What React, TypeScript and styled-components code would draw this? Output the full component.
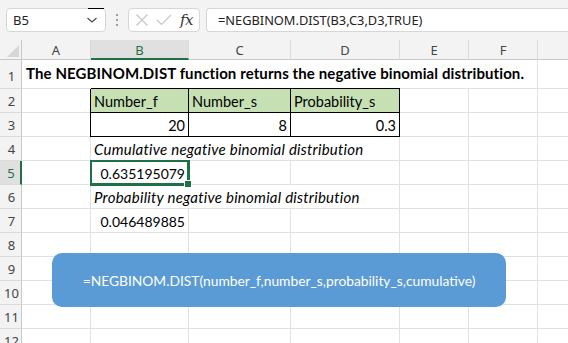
import { FC } from 'react'
import styled, { createGlobalStyle, css } from 'styled-components'

const GlobalStyle = createGlobalStyle`
  html, body {
    margin: 0;
    padding: 0;
    background: #ffffff;
    overflow: hidden;
  }
`

const UI_FONT = `"Noto Sans", "Open Sans", sans-serif`
const CELL_FONT = `Lato, "Liberation Sans", sans-serif`
const GREEN = '#1e7145'
const GRID = '#e1e1e1'

const columns = ['A', 'B', 'C', 'D', 'E', 'F', '']
const colWidths = [69, 98, 102, 109, 69, 69, 60]

const FormulaToolbar = () => {
  return (
    <TopBar>
      <NameBox>
        <span>B5</span>
        <TopMark />
        <svg width="12" height="8" viewBox="0 0 12 8">
          <path d="M1.5 2 L6 6 L10.5 2" fill="none" stroke="#444" strokeWidth="1.1" />
        </svg>
      </NameBox>
      <Dots>
        <svg width="4" height="14" viewBox="0 0 4 14">
          <circle cx="2" cy="2" r="1.1" fill="#8a8a8a" />
          <circle cx="2" cy="7" r="1.1" fill="#8a8a8a" />
          <circle cx="2" cy="12" r="1.1" fill="#8a8a8a" />
        </svg>
      </Dots>
      <FxBox>
        <svg width="14" height="14" viewBox="0 0 14 14">
          <path d="M1.5 1.5 L12.5 12.5 M12.5 1.5 L1.5 12.5" stroke="#c4c4c4" strokeWidth="1.1" />
        </svg>
        <svg width="16" height="12" viewBox="0 0 16 12">
          <path d="M1 6 L5.5 10.5 L15 1" fill="none" stroke="#c4c4c4" strokeWidth="1.1" />
        </svg>
        <FxLabel>fx</FxLabel>
      </FxBox>
      <FormulaBox>=NEGBINOM.DIST(B3,C3,D3,TRUE)</FormulaBox>
    </TopBar>
  )
}

const Sheet = () => {
  const rowCells = (row: number) => {
    switch (row) {
      case 1:
        return [
          <Cell key="a" $span={6} $bold $title>
            The NEGBINOM.DIST function returns the negative binomial distribution.
          </Cell>,
          <Cell key="g" />,
        ]
      case 2:
        return [
          <Cell key="a" />,
          <Cell key="b" $table $fill $top $left>Number_f</Cell>,
          <Cell key="c" $table $fill $top>Number_s</Cell>,
          <Cell key="d" $table $fill $top>Probability_s</Cell>,
          <Cell key="e" />,
          <Cell key="f" />,
          <Cell key="g" />,
        ]
      case 3:
        return [
          <Cell key="a" />,
          <Cell key="b" $table $left $right>20</Cell>,
          <Cell key="c" $table $right>8</Cell>,
          <Cell key="d" $table $right>0.3</Cell>,
          <Cell key="e" />,
          <Cell key="f" />,
          <Cell key="g" />,
        ]
      case 4:
      case 6:
        return [
          <Cell key="a" />,
          <Cell key="b" $span={3} $italic>
            {row === 4 ? 'Cumulative negative binomial distribution' : 'Probability negative binomial distribution'}
          </Cell>,
          <Cell key="e" />,
          <Cell key="f" />,
          <Cell key="g" />,
        ]
      case 5:
        return [
          <Cell key="a" />,
          <Cell key="b" $right $number $selected>
            0.635195079
            <FillHandle />
          </Cell>,
          <Cell key="c" />,
          <Cell key="d" />,
          <Cell key="e" />,
          <Cell key="f" />,
          <Cell key="g" />,
        ]
      case 7:
        return [
          <Cell key="a" />,
          <Cell key="b" $right $number>0.046489885</Cell>,
          <Cell key="c" />,
          <Cell key="d" />,
          <Cell key="e" />,
          <Cell key="f" />,
          <Cell key="g" />,
        ]
      default:
        return columns.map((c, i) => <Cell key={i} />)
    }
  }

  return (
    <Grid>
      <Corner>
        <svg width="12" height="12" viewBox="0 0 12 12">
          <path d="M12 0 L12 12 L0 12 Z" fill="#d6d6d6" />
        </svg>
      </Corner>
      {columns.map((c, i) => (
        <ColHeader key={c + i} $active={c === 'B'}>
          {c}
        </ColHeader>
      ))}
      {Array.from({ length: 12 }, (_, i) => i + 1).map((row) => [
        <RowHeader key={'h' + row} $active={row === 5} $tall={row === 1}>
          {row}
        </RowHeader>,
        ...rowCells(row),
      ])}
    </Grid>
  )
}

const App: FC = () => {
  return (
    <Page>
      <GlobalStyle />
      <FormulaToolbar />
      <SheetArea>
        <Sheet />
        <Callout>=NEGBINOM.DIST(number_f,number_s,probability_s,cumulative)</Callout>
      </SheetArea>
    </Page>
  )
}

const Page = styled.div`
  width: 568px;
  height: 343px;
  overflow: hidden;
  background: #ffffff;
`
const TopBar = styled.div`
  height: 40px;
  box-sizing: border-box;
  background: #f3f3f3;
  display: flex;
  align-items: center;
  padding-left: 6px;
  font-family: ${UI_FONT};
`
const NameBox = styled.div`
  position: relative;
  width: 100px;
  height: 24px;
  box-sizing: border-box;
  background: #ffffff;
  border: 1px solid #d6d6d6;
  border-radius: 4px;
  display: flex;
  align-items: center;
  justify-content: space-between;
  padding: 0 7px 0 6px;
  font-size: 13px;
  color: #222;
`
const TopMark = styled.div`
  position: absolute;
  left: 81px;
  top: -1px;
  width: 16px;
  height: 1px;
  background: #000;
`
const Dots = styled.div`
  width: 22px;
  display: flex;
  justify-content: center;
`
const FxBox = styled.div`
  width: 72px;
  height: 24px;
  box-sizing: border-box;
  background: #ffffff;
  border: 1px solid #d6d6d6;
  border-radius: 4px;
  display: flex;
  align-items: center;
  justify-content: space-between;
  padding: 0 6px 0 6px;
`
const FxLabel = styled.span`
  font-family: "DejaVu Serif", "Liberation Serif", serif;
  font-style: italic;
  font-size: 15px;
  color: #333;
  letter-spacing: -0.5px;
`
const FormulaBox = styled.div`
  flex: 1;
  margin-left: 6px;
  height: 24px;
  box-sizing: border-box;
  background: #ffffff;
  border: 1px solid #d6d6d6;
  border-right: none;
  border-radius: 4px 0 0 4px;
  display: flex;
  align-items: center;
  padding-left: 11px;
  font-size: 12.8px;
  color: #222;
`
const SheetArea = styled.div`
  position: relative;
`
const Grid = styled.div`
  display: grid;
  grid-template-columns: 22px ${colWidths.map((w) => w + 'px').join(' ')};
  grid-template-rows: 20px 29px repeat(11, 24px);
`
const headerBase = css`
  box-sizing: border-box;
  background: #f3f3f3;
  font-family: ${UI_FONT};
  font-size: 13px;
  color: #444;
  display: flex;
  align-items: center;
  justify-content: center;
`
const Corner = styled.div`
  ${headerBase};
  border-right: 1px solid #c8c8c8;
  border-bottom: 1px solid #c8c8c8;
  align-items: flex-end;
  justify-content: flex-end;
  padding: 0 2px 2px 0;
`
const ColHeader = styled.div<{ $active?: boolean }>`
  ${headerBase};
  border-right: 1px solid #dadada;
  border-bottom: ${(p) => (p.$active ? `2px solid ${GREEN}` : '1px solid #c8c8c8')};
  background: ${(p) => (p.$active ? '#e0e0e0' : '#f3f3f3')};
  color: ${(p) => (p.$active ? GREEN : '#444')};
  padding-top: ${(p) => (p.$active ? '1px' : '0')};
`
const RowHeader = styled.div<{ $active?: boolean; $tall?: boolean }>`
  ${headerBase};
  border-bottom: 1px solid #dadada;
  border-right: ${(p) => (p.$active ? `2px solid ${GREEN}` : '1px solid #c8c8c8')};
  background: ${(p) => (p.$active ? '#e0e0e0' : '#f3f3f3')};
  color: ${(p) => (p.$active ? GREEN : '#444')};
  align-items: ${(p) => (p.$tall ? 'flex-end' : 'center')};
  padding-bottom: ${(p) => (p.$tall ? '3px' : '0')};
  padding-left: 2px;
`
const Cell = styled.div<{
  $span?: number
  $bold?: boolean
  $italic?: boolean
  $title?: boolean
  $right?: boolean
  $number?: boolean
  $table?: boolean
  $fill?: boolean
  $top?: boolean
  $left?: boolean
  $selected?: boolean
}>`
  position: relative;
  box-sizing: border-box;
  grid-column: span ${(p) => p.$span || 1};
  border-right: 1px solid ${(p) => (p.$table ? '#000' : GRID)};
  border-bottom: 1px solid ${(p) => (p.$table ? '#000' : GRID)};
  background: ${(p) => (p.$fill ? '#c6e0b4' : '#ffffff')};
  font-family: ${CELL_FONT};
  font-size: 14.5px;
  font-weight: ${(p) => (p.$bold ? 700 : 400)};
  font-style: ${(p) => (p.$italic ? 'italic' : 'normal')};
  color: #000;
  white-space: nowrap;
  display: flex;
  align-items: flex-end;
  justify-content: ${(p) => (p.$right ? 'flex-end' : 'flex-start')};
  padding: 0 3px 2px 3px;
  ${(p) =>
    p.$italic &&
    css`
      font-size: 15px;
      letter-spacing: 0.25px;
    `}
  ${(p) =>
    p.$number &&
    css`
      font-size: 14px;
    `}
  ${(p) =>
    p.$top &&
    css`
      box-shadow: 0 -1px 0 #000 ${p.$left ? ', -1px 0 0 #000' : ''};
    `}
  ${(p) =>
    !p.$top &&
    p.$left &&
    css`
      box-shadow: -1px 0 0 #000;
    `}
  ${(p) =>
    p.$title &&
    css`
      font-size: 15px;
      letter-spacing: 0.1px;
      align-items: center;
      padding: 0 0 2px 4px;
    `}
  ${(p) =>
    p.$selected &&
    css`
      box-shadow: 0 0 0 1px ${GREEN}, inset 0 0 0 1px ${GREEN};
      border-color: ${GREEN};
      z-index: 2;
    `}
`
const FillHandle = styled.div`
  position: absolute;
  right: -4px;
  bottom: -4px;
  width: 6px;
  height: 6px;
  background: ${GREEN};
  border: 1px solid #ffffff;
`
const Callout = styled.div`
  position: absolute;
  left: 52px;
  top: 213px;
  width: 454px;
  height: 54px;
  border-radius: 10px;
  background: #5b9bd5;
  color: #ffffff;
  font-family: ${CELL_FONT};
  font-size: 13.8px;
  display: flex;
  align-items: center;
  justify-content: center;
  padding-top: 1px;
  box-sizing: border-box;
`

export default App
